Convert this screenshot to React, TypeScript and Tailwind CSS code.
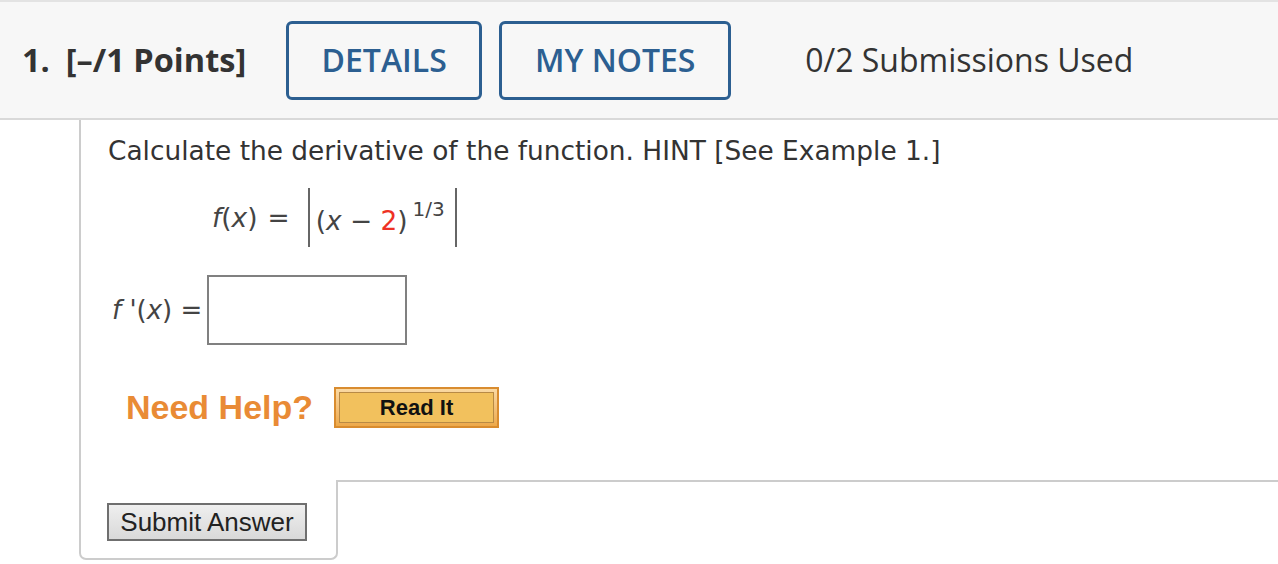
export default function App() {
  return (
    <div className="w-[1278px] h-[564px] overflow-hidden bg-white">
      {/* Question header */}
      <header className="h-[120px] border-t-2 border-b-2 border-t-[#e3e3e3] border-b-[#d9d9d9] bg-[#f7f7f7] flex items-center pl-[22px] font-['Open_Sans',sans-serif] text-[#333]">
        <div className="flex items-baseline font-bold text-[32.5px]">
          <span>1.</span>
          <span className="ml-[16px]">[–/1 Points]</span>
        </div>
        <button className="ml-[40px] w-[196px] h-[79px] border-[3px] border-[#2c5f91] rounded-[6px] text-[#2c5f91] text-[32px] font-semibold">
          DETAILS
        </button>
        <button className="ml-[17px] w-[232px] h-[79px] border-[3px] border-[#2c5f91] rounded-[6px] text-[#2c5f91] text-[32px] font-semibold">
          MY NOTES
        </button>
        <span className="ml-[74px] text-[32px]">0/2 Submissions Used</span>
      </header>

      {/* Question body */}
      <div className="ml-[79px] h-[360px] border-l-2 border-[#cccccc] pl-[27px] pt-[15px] font-['DejaVu_Sans',Verdana,sans-serif] text-[#333]">
        <p className="text-[26.4px] leading-[32px]">
          Calculate the derivative of the function. HINT [See Example 1.]
        </p>

        <div className="mt-[21px] ml-[104px] flex items-center h-[59px] text-[26.4px] text-[#444] whitespace-pre">
          <span>
            <i>f</i>(<i>x</i>)
          </span>
          <span className="ml-[10px]">=</span>
          <span className="ml-[18px] w-[2px] h-[59px] bg-[#666]" />
          <span className="ml-[6px]">
            (<i>x</i> − <span className="text-[#ee3124]">2</span>)
            <span className="text-[20px] align-[14px] ml-[5px]">1/3</span>
          </span>
          <span className="ml-[10px] w-[2px] h-[59px] bg-[#666]" />
        </div>

        <div className="mt-[28px] flex items-center">
          <span className="ml-[4px] text-[26px] text-[#444] whitespace-pre">
            <i>f</i> '(<i>x</i>) =
          </span>
          <div className="ml-[5px] w-[200px] h-[70px] border-2 border-[#808080] bg-white" />
        </div>

        <div className="mt-[37px] flex items-center">
          <span className="ml-[18px] font-['Liberation_Sans',Arial,sans-serif] font-bold text-[34px] text-[#e98b35]">
            Need Help?
          </span>
          <button className="ml-[21px] w-[165px] h-[41px] border-2 border-[#d98c2f] bg-gradient-to-b from-[#fad9a3] to-[#eda94a] p-[3px]">
            <div className="h-full border border-[#b88a45] bg-[#f2c15d] flex items-center justify-center font-['Liberation_Sans',Arial,sans-serif] font-bold text-[22px] text-[#111]">
              Read It
            </div>
          </button>
        </div>
      </div>

      {/* Submit row */}
      <div className="flex h-[80px]">
        <div className="ml-[79px] w-[259px] h-full border-2 border-t-0 border-[#cccccc] rounded-b-[7px] pl-[26px] pt-[23px]">
          <button className="w-[200px] h-[38px] border-2 border-[#6f6f6f] bg-gradient-to-b from-[#efefef] to-[#d9d9d9] font-['Liberation_Sans',Arial,sans-serif] text-[26px] leading-none text-[#222]">
            Submit Answer
          </button>
        </div>
        <div className="flex-1 border-t-2 border-[#cccccc]" />
      </div>
    </div>
  );
}
